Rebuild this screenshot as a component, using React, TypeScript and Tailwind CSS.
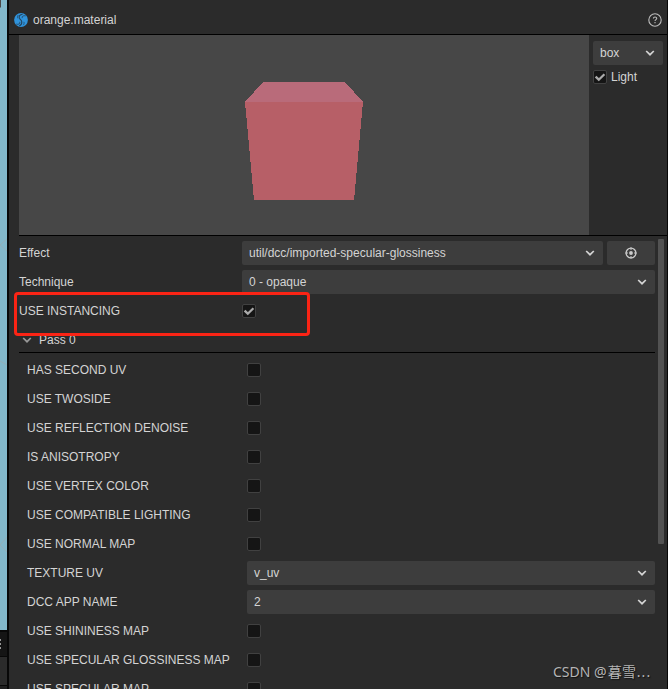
import React from "react";

function Chevron({ className = "" }: { className?: string }) {
  return (
    <svg className={`shrink-0 ${className}`} width="10" height="6" viewBox="0 0 10 6" fill="none">
      <path d="M1.2 1L5 4.7L8.8 1" stroke="currentColor" strokeWidth="1.7" />
    </svg>
  );
}

function Checkbox({ checked = false }: { checked?: boolean }) {
  return (
    <span className="flex h-3.5 w-3.5 shrink-0 items-center justify-center rounded-[2px] border border-[#414141] bg-[#151515]">
      {checked && (
        <svg className="shrink-0" width="12" height="12" viewBox="0 0 12 12" fill="none">
          <path d="M1.6 5.6L4.8 8.7L10.4 3.2" stroke="#aaa" strokeWidth="2.3" />
        </svg>
      )}
    </span>
  );
}

function Select({ value, className = "" }: { value: string; className?: string }) {
  return (
    <div className={`flex h-6 items-center justify-between rounded-[2px] bg-[#3d3d3d] pr-2 pl-[7px] ${className}`}>
      <span>{value}</span>
      <Chevron />
    </div>
  );
}

type Prop = { label: string; value?: string };

const props: Prop[] = [
  { label: "HAS SECOND UV" },
  { label: "USE TWOSIDE" },
  { label: "USE REFLECTION DENOISE" },
  { label: "IS ANISOTROPY" },
  { label: "USE VERTEX COLOR" },
  { label: "USE COMPATIBLE LIGHTING" },
  { label: "USE NORMAL MAP" },
  { label: "TEXTURE UV", value: "v_uv" },
  { label: "DCC APP NAME", value: "2" },
  { label: "USE SHININESS MAP" },
  { label: "USE SPECULAR GLOSSINESS MAP" },
  { label: "USE SPECULAR MAP" },
];

function SceneEdge() {
  return (
    <div className="flex w-[7px] shrink-0 flex-col overflow-hidden bg-[#151515]">
      <div className="h-[630px] shrink-0 bg-[#82b7ca]">
        <svg width="7" height="630" fill="none">
          <path d="M0 0H1V7L0 8Z" fill="#4a4748" />
          <path d="M0 245L7 239M0 245L7 251M0 361L7 365M0 545L7 537M0 545L7 552" stroke="#93aeb8" strokeWidth="1" />
        </svg>
      </div>
      <div className="h-[2px] shrink-0 bg-[#080808]" />
      <div className="flex h-6 shrink-0 flex-col justify-center gap-[2px] bg-[#151515]">
        <i className="h-[2px] w-px bg-[#999]" />
        <i className="h-[2px] w-px bg-[#999]" />
        <i className="h-[2px] w-px bg-[#999]" />
      </div>
      <div className="h-px shrink-0 bg-[#080808]" />
      <div className="h-7 shrink-0 bg-[#2b2b2b]" />
      <div className="h-px shrink-0 bg-[#080808]" />
      <div className="flex-1 bg-[#202020]" />
    </div>
  );
}

function Header() {
  return (
    <header className="flex h-[35px] shrink-0 items-center border-b border-black pt-[5px] pr-[5px] pl-[5px]">
      <svg width="14" height="14" viewBox="0 0 14 14" fill="none">
        <circle cx="7" cy="7" r="6.9" fill="#3093db" />
        <path d="M8.6 1.2C5.8 1.5 4.5 3.1 5.4 5.3C6.1 6.8 7.7 7.1 7.8 9C7.9 10.9 6.8 12.2 5.2 12.8" stroke="#22455f" strokeWidth="1.1" />
        <path d="M11.8 2.8C9.3 2.4 7.7 3.1 8.2 5.1M2.2 11.1C4.6 11.8 6.3 10.9 5.8 8.8M4.4 2C3.5 3 3.3 4 3.8 5.3M9.8 8.8C10.4 10.1 10 11.2 9.3 12.1" stroke="#22455f" strokeWidth=".8" />
      </svg>
      <span className="ml-[5px] flex-1">orange.material</span>
      <svg width="14" height="14" viewBox="0 0 14 14" fill="none" stroke="#bdbdbd">
        <circle cx="7" cy="7" r="6.2" strokeWidth="1.1" />
        <path d="M5.4 5.6C5.4 3.4 8.7 3.5 8.7 5.4C8.7 6.7 7 6.5 7 8.1M7 9.1V10.2" strokeWidth="1.1" />
      </svg>
    </header>
  );
}

function Preview() {
  return (
    <section className="ml-2.5 flex h-[201px] shrink-0 border-b border-black">
      <div className="w-[570px] bg-[#474747]">
        <svg width="570" height="200" shapeRendering="crispEdges">
          <path d="M244 47H326L344 67H226Z" fill="#b96b7a" />
          <path d="M226 67H344L335 165H235Z" fill="#b75f67" />
        </svg>
      </div>
      <div className="pt-1.5 pl-1">
        <Select value="box" className="w-[70px]" />
        <div className="mt-[5px] flex h-[14px] items-center gap-1">
          <Checkbox checked />
          <span>Light</span>
        </div>
      </div>
    </section>
  );
}

function Inspector() {
  return (
    <div className="flex min-h-0 flex-1 overflow-hidden">
      <main className="ml-2.5 w-[636px] shrink-0 pt-[2px]">
        <div className="flex h-[29px] items-center">
          <span className="w-[223px]">Effect</span>
          <Select value="util/dcc/imported-specular-glossiness" className="w-[361px]" />
          <div className="ml-1 flex h-6 w-12 items-center justify-center rounded-[2px] bg-[#3d3d3d]">
            <svg width="12" height="12" viewBox="0 0 12 12" fill="none" stroke="#ccc">
              <circle cx="6" cy="6" r="4.9" strokeWidth="1.3" />
              <circle cx="6" cy="6" r="1.9" fill="#ccc" stroke="none" />
              <path d="M6 .3V3M6 9V11.7M.3 6H3M9 6H11.7" />
            </svg>
          </div>
        </div>
        <div className="flex h-[29px] items-center">
          <span className="w-[223px]">Technique</span>
          <Select value="0 - opaque" className="flex-1" />
        </div>
        <div className="relative flex h-[29px] items-center">
          <span className="w-[223px]">USE INSTANCING</span>
          <Checkbox checked />
          <div className="absolute top-[-4px] left-[-5px] z-10 h-[44px] w-[296px] rounded-[4px] border-[3px] border-[#fb2415]" />
        </div>
        <div className="flex h-[28px] items-center border-b border-black pt-[2px] pl-[3px]">
          <Chevron className="text-[#999]" />
          <span className="ml-[7px]">Pass 0</span>
        </div>
        <div className="pt-[2px] pl-2">
          {props.map((prop) => (
            <div key={prop.label} className="flex h-[29px] items-center">
              <span className="w-[220px] whitespace-nowrap">{prop.label}</span>
              {prop.value ? <Select value={prop.value} className="flex-1" /> : <Checkbox />}
            </div>
          ))}
        </div>
      </main>
      <div className="mt-[3px] ml-[3px] h-[305px] w-1.5 rounded-[1px] bg-[#525252]" />
    </div>
  );
}

export default function App() {
  return (
    <div className="relative flex h-[689px] w-[668px] overflow-hidden bg-[#2b2b2b] font-['Liberation_Sans',Arial,sans-serif] text-[12px] leading-4 text-[#d4d4d4]">
      <SceneEdge />
      <div className="flex min-w-0 flex-1 flex-col border-r border-l-2 border-[#080808]">
        <Header />
        <Preview />
        <Inspector />
      </div>
      <span className="absolute top-[662px] left-[553px] font-['Noto_Sans','Noto_Sans_CJK_SC',sans-serif] text-[14px] leading-5 whitespace-nowrap text-[#b5b5b5] [text-shadow:1px_1px_1px_#111]">
        CSDN @<span className="ml-px tracking-[.5px]">暮雪</span><span className="tracking-[1.2px]">...</span>
      </span>
    </div>
  );
}
